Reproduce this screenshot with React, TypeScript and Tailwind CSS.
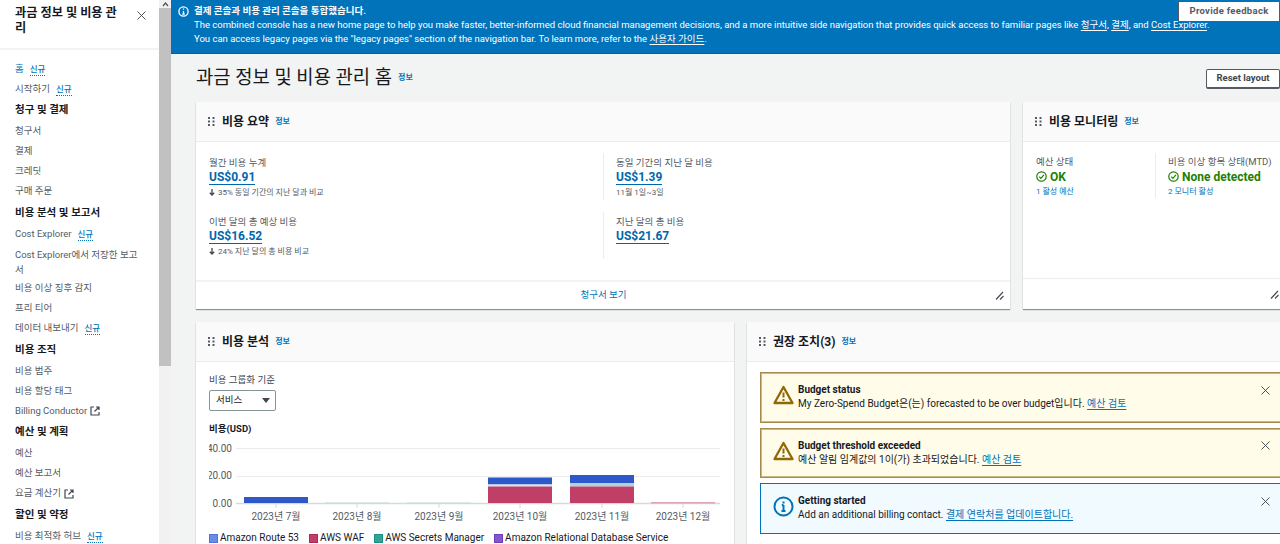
import React from 'react';
import { X } from 'lucide-react';

const FONT = { fontFamily: 'Roboto, "Noto Sans CJK KR", sans-serif' };

type NavItem = { label: string; kind?: 'head' | 'active'; isNew?: boolean; ext?: boolean; wrap?: boolean };

const NAV: NavItem[] = [
  { label: '홈', kind: 'active', isNew: true },
  { label: '시작하기', isNew: true },
  { label: '청구 및 결제', kind: 'head' },
  { label: '청구서' },
  { label: '결제' },
  { label: '크레딧' },
  { label: '구매 주문' },
  { label: '비용 분석 및 보고서', kind: 'head' },
  { label: 'Cost Explorer', isNew: true },
  { label: 'Cost Explorer에서 저장한 보고서', wrap: true },
  { label: '비용 이상 징후 감지' },
  { label: '프리 티어' },
  { label: '데이터 내보내기', isNew: true },
  { label: '비용 조직', kind: 'head' },
  { label: '비용 범주' },
  { label: '비용 할당 태그' },
  { label: 'Billing Conductor', ext: true },
  { label: '예산 및 계획', kind: 'head' },
  { label: '예산' },
  { label: '예산 보고서' },
  { label: '요금 계산기', ext: true },
  { label: '할인 및 약정', kind: 'head' },
  { label: '비용 최적화 허브', isNew: true },
];

const ExternalIcon = () => (
  <svg width="10" height="10" viewBox="0 0 10 10" fill="none" stroke="#414750" strokeWidth="1.2" className="ml-[3px] shrink-0">
    <path d="M4 1H1v8h8V6M6 1h3v3M9 1L4.5 5.5" />
  </svg>
);

const Sidebar = () => (
  <aside className="w-[159px] shrink-0 h-full bg-white overflow-hidden">
    <div className="h-[50px] border-b-2 border-[#f2f3f3] pl-[15px] pr-[10px] pt-[6px] flex justify-between">
      <div className="w-[110px] text-[12.2px] leading-[15px] font-bold text-[#16191f]">과금 정보 및 비용 관리</div>
      <X size={15} strokeWidth={1.5} color="#414750" className="mt-[2px]" />
    </div>
    <nav className="pl-[15px] pr-[16px] pt-[9px]">
      {NAV.map((item) => {
        if (item.kind === 'head') {
          return (
            <div key={item.label} className="h-[22.5px] flex items-center text-[10.5px] font-bold text-[#16191f]">
              {item.label}
            </div>
          );
        }
        if (item.wrap) {
          return (
            <div key={item.label} className="h-[34.5px] w-[124px] pt-[3px] text-[9.5px] leading-[15px] text-[#545b64]">
              {item.label}
            </div>
          );
        }
        return (
          <div key={item.label} className={`h-[20px] flex items-center text-[9.5px] ${item.kind === 'active' ? 'text-[#0073bb]' : 'text-[#545b64]'}`}>
            <span className="whitespace-nowrap">{item.label}</span>
            {item.isNew && (
              <span className="ml-[6px] text-[8.5px] font-medium text-[#0073bb] border-b border-dotted border-[#0073bb] leading-[12px]">신규</span>
            )}
            {item.ext && <ExternalIcon />}
          </div>
        );
      })}
    </nav>
  </aside>
);

const Scrollbar = () => (
  <div className="w-[12px] shrink-0 h-full bg-[#f1f1f1] flex flex-col">
    <div className="h-[8px] flex items-center justify-center">
      <svg width="7" height="5" viewBox="0 0 7 5" fill="none" stroke="#505050" strokeWidth="1.2">
        <path d="M1 4l2.5-3L6 4" />
      </svg>
    </div>
    <div className="h-[358px] bg-[#c1c1c1]" />
  </div>
);

const Banner = () => (
  <div className="h-[54px] shrink-0 bg-[#0073bb] border-b border-[#0a5f96] flex text-white pl-[7px]">
    <svg width="11" height="11" viewBox="0 0 11 11" fill="none" stroke="white" strokeWidth="1.3" className="mt-[6px] shrink-0">
      <circle cx="5.5" cy="5.5" r="4.6" />
      <path d="M5.5 5v3M4.3 8h2.4M5.5 2.6v1.2" />
    </svg>
    <div className="ml-[5px] pt-[3px] flex-1 min-w-0 text-[9.5px] leading-[13.5px] whitespace-nowrap">
      <div className="font-semibold leading-[15px]">결제 콘솔과 비용 관리 콘솔을 통합했습니다.</div>
      <div>
        The combined console has a new home page to help you make faster, better-informed cloud financial management decisions, and a more intuitive side navigation that provides quick access to familiar pages like{' '}
        <a className="underline underline-offset-2">청구서</a>, <a className="underline underline-offset-2">결제</a>, and <a className="underline underline-offset-2">Cost Explorer</a>.
      </div>
      <div>
        You can access legacy pages via the "legacy pages" section of the navigation bar. To learn more, refer to the{' '}
        <a className="underline underline-offset-2">사용자 가이드</a>.
      </div>
    </div>
    <button className="w-[102px] h-[21px] mt-[1px] shrink-0 bg-white border border-[#545b64] text-[#545b64] text-[9.5px] font-bold tracking-[0.3px]">
      Provide feedback
    </button>
  </div>
);

const Drag = () => (
  <svg width="7" height="9" viewBox="0 0 7 9" fill="#545b64" className="shrink-0">
    <rect x="0" y="0" width="2" height="2" />
    <rect x="4.5" y="0" width="2" height="2" />
    <rect x="0" y="3.5" width="2" height="2" />
    <rect x="4.5" y="3.5" width="2" height="2" />
    <rect x="0" y="7" width="2" height="2" />
    <rect x="4.5" y="7" width="2" height="2" />
  </svg>
);

const Resize = () => (
  <svg width="9" height="9" viewBox="0 0 9 9" fill="none" stroke="#414750" strokeWidth="1.1" className="shrink-0">
    <path d="M1 8.5L8 1M5 8.5L8.5 5" />
  </svg>
);

const Info = () => <span className="text-[8px] font-bold text-[#0073bb]">정보</span>;

const Card = ({ title, children, className }: { title: string; children: React.ReactNode; className: string }) => (
  <section className={`bg-white shadow-[0_1px_1px_0_#8d9096] flex flex-col ${className}`}>
    <header className="h-[40px] shrink-0 bg-[#fafafa] border-b border-[#eaeded] flex items-center pl-[12px]">
      <Drag />
      <h2 className="ml-[7px] mr-[6px] text-[12px] font-bold text-[#16191f]">{title}</h2>
      <Info />
    </header>
    {children}
  </section>
);

const Metric = ({ label, value, sub, arrow }: { label: string; value: string; sub?: string; arrow?: boolean }) => (
  <div className="h-[59px]">
    <div className="text-[9.5px] leading-[14px] text-[#545b64]">{label}</div>
    <div className="h-[15px] flex items-center">
      <span className="text-[12px] font-bold leading-[14px] text-[#0067ac] border-b border-[#0067ac]">{value}</span>
    </div>
    {sub && (
      <div className="mt-[1px] flex items-center text-[8px] leading-[13px] text-[#545b64]">
        {arrow && (
          <svg width="6" height="7" viewBox="0 0 6 7" fill="none" stroke="#414750" strokeWidth="1.3" className="mr-[3px]">
            <path d="M3 0v6M.8 3.8L3 6l2.2-2.2" />
          </svg>
        )}
        {sub}
      </div>
    )}
  </div>
);

const Summary = () => (
  <Card title="비용 요약" className="h-[207px]">
    <div className="flex-1 grid grid-cols-[407px_1fr]">
      <div className="pl-[13px] pt-[14px]">
        <Metric label="월간 비용 누계" value="US$0.91" sub="35% 동일 기간의 지난 달과 비교" arrow />
        <Metric label="이번 달의 총 예상 비용" value="US$16.52" sub="24% 지난 달의 총 비용 비교" arrow />
      </div>
      <div className="pt-[11px]">
        <div className="border-l border-[#eaeded] pl-[12px] pt-[3px] h-[47px] mb-[12px]">
          <Metric label="동일 기간의 지난 달 비용" value="US$1.39" sub="11월 1일~3일" />
        </div>
        <div className="border-l border-[#eaeded] pl-[12px] pt-[3px] h-[47px]">
          <Metric label="지난 달의 총 비용" value="US$21.67" />
        </div>
      </div>
    </div>
    <footer className="h-[29px] shrink-0 border-t-2 border-[#f2f3f3] flex items-center pr-[6px]">
      <a className="flex-1 text-center pl-[16px] text-[9.5px] text-[#0073bb]">청구서 보기</a>
      <Resize />
    </footer>
  </Card>
);

const Check = () => (
  <svg width="11" height="11" viewBox="0 0 11 11" fill="none" stroke="#1d8102" strokeWidth="1.2" className="shrink-0 mr-[3px]">
    <circle cx="5.5" cy="5.5" r="4.7" />
    <path d="M3.2 5.6l1.7 1.7 3-3.4" />
  </svg>
);

const Monitoring = () => (
  <Card title="비용 모니터링" className="h-[207px]">
    <div className="flex-1 grid grid-cols-[119px_1fr] pt-[11px] pl-[13px]">
      <div className="pt-[2px]">
        <div className="text-[9.5px] leading-[14px] text-[#545b64]">예산 상태</div>
        <div className="flex items-center h-[15px] text-[12px] font-bold text-[#1d8102]"><Check />OK</div>
        <div className="mt-[2px] text-[8px] leading-[12px] text-[#0073bb]">1 활성 예산</div>
      </div>
      <div className="border-l border-[#eaeded] pl-[12px] pt-[2px] h-[45px] whitespace-nowrap">
        <div className="text-[9.5px] leading-[14px] text-[#545b64]">비용 이상 항목 상태(MTD)</div>
        <div className="flex items-center h-[15px] text-[12px] font-bold text-[#1d8102]"><Check />None detected</div>
        <div className="mt-[2px] text-[8px] leading-[12px] text-[#0073bb]">2 모니터 활성</div>
      </div>
    </div>
    <footer className="h-[31px] shrink-0 border-t border-[#eaeded] flex items-center justify-end pr-[3px]">
      <Resize />
    </footer>
  </Card>
);

const BARS = [
  { x: 35, label: '2023년 7월' },
  { x: 116, label: '2023년 8월' },
  { x: 198, label: '2023년 9월' },
  { x: 279, label: '2023년 10월' },
  { x: 361, label: '2023년 11월' },
  { x: 442, label: '2023년 12월' },
];

const Chart = () => (
  <svg width="511" height="84" viewBox="0 0 511 84" className="block" style={FONT}>
    <g fontSize="10" fill="#545b64" textAnchor="end">
      <text x="23" y="11.5">40.00</text>
      <text x="23" y="39">20.00</text>
      <text x="23" y="66.5">0.00</text>
    </g>
    <path d="M27 8.5H511M27 36.5H511" stroke="#e9ebed" />
    <path d="M27 63.5H511" stroke="#d5dbdb" strokeWidth="1.5" />
    <rect x="35" y="57" width="64" height="6" fill="#2e58c9" />
    <rect x="116" y="62.5" width="64" height="1" fill="#c5dcd8" />
    <rect x="198" y="62.5" width="64" height="1" fill="#c5dcd8" />
    <rect x="279" y="37.5" width="64" height="7" fill="#2e58c9" />
    <rect x="279" y="44.5" width="64" height="2" fill="#cfe6ea" />
    <rect x="279" y="46.5" width="64" height="16.5" fill="#c03f66" />
    <rect x="361" y="35" width="64" height="8" fill="#2e58c9" />
    <rect x="361" y="43" width="64" height="3.5" fill="#a9d6dc" />
    <rect x="361" y="46.5" width="64" height="16.5" fill="#c03f66" />
    <rect x="442" y="62" width="64" height="1.5" fill="#dca6b8" />
    {BARS.map((b) => (
      <g key={b.label}>
        <path d={`M${b.x + 32} 64v4`} stroke="#d5dbdb" />
        <text x={b.x + 32} y="80" fontSize="10" fill="#545b64" textAnchor="middle">{b.label}</text>
      </g>
    ))}
  </svg>
);

const LEGEND = [
  { label: 'Amazon Route 53', cls: 'bg-[#688ae8] border-[#4f74dd]' },
  { label: 'AWS WAF', cls: 'bg-[#c33d69] border-[#ad2c56]' },
  { label: 'AWS Secrets Manager', cls: 'bg-[#2ea597] border-[#1f8f82]' },
  { label: 'Amazon Relational Database Service', cls: 'bg-[#8456ce] border-[#6b3fb5]' },
];

const Analysis = () => (
  <Card title="비용 분석" className="h-[300px]">
    <div className="pl-[13px] pt-[11px]">
      <div className="text-[9.5px] leading-[14px] text-[#414750]">비용 그룹화 기준</div>
      <div className="mt-[3px] w-[67px] h-[21px] border border-[#879596] rounded-[2px] flex items-center justify-between pl-[6px] pr-[5px] text-[9.5px] text-[#16191f]">
        서비스
        <svg width="8" height="5" viewBox="0 0 8 5" fill="#414750"><path d="M0 0h8L4 5z" /></svg>
      </div>
      <div className="mt-[11px] h-[14px] text-[9.5px] leading-[14px] font-bold text-[#16191f]">비용(USD)</div>
      <div className="mt-[4px]"><Chart /></div>
      <div className="mt-[7px] flex gap-[10px] text-[10px] leading-[14px] text-[#16191f] whitespace-nowrap">
        {LEGEND.map((l) => (
          <div key={l.label} className="flex items-center gap-[2px]">
            <span className={`w-[9px] h-[9px] border ${l.cls}`} />
            {l.label}
          </div>
        ))}
      </div>
    </div>
  </Card>
);

const Warn = () => (
  <svg width="21" height="20" viewBox="0 0 21 20" fill="none" className="shrink-0">
    <path d="M10.5 2L19.5 18H1.5z" stroke="#906806" strokeWidth="2.3" strokeLinejoin="round" />
    <path d="M10.5 7.5v5M10.5 14v2" stroke="#906806" strokeWidth="2" />
  </svg>
);

const InfoBig = () => (
  <svg width="21" height="21" viewBox="0 0 21 21" fill="none" className="shrink-0">
    <circle cx="10.5" cy="10.5" r="9" stroke="#0073bb" strokeWidth="2" />
    <path d="M10.5 9v6M8.5 15h4M8.8 9h1.7M10.5 5.5v2" stroke="#0073bb" strokeWidth="2" />
  </svg>
);

const Alert = ({ kind, title, text, link }: { kind: 'warn' | 'info'; title: string; text: string; link: string }) => (
  <div className={`h-[50.5px] border flex pl-[12px] pr-[11px] ${kind === 'warn' ? 'border-[#a58c4c] bg-[#fffce9] shadow-[inset_0_0_0_1px_#c9b681]' : 'border-[#0073bb] bg-[#f1faff]'}`}>
    <div className="w-[25px] pt-[12px] shrink-0">{kind === 'warn' ? <Warn /> : <InfoBig />}</div>
    <div className="flex-1 pt-[10px] text-[10px] leading-[14px] text-[#16191f] whitespace-nowrap">
      <div className="font-bold">{title}</div>
      <div>
        {text} <a className="text-[#0073bb] underline underline-offset-2">{link}</a>
      </div>
    </div>
    <X size={15} strokeWidth={1.5} color="#414750" className="mt-[9.5px]" />
  </div>
);

const Actions = () => (
  <Card title="권장 조치(3)" className="h-[300px]">
    <div className="pt-[10px] pl-[13px] pr-[8px] flex flex-col gap-[5px]">
      <Alert kind="warn" title="Budget status" text="My Zero-Spend Budget은(는) forecasted to be over budget입니다." link="예산 검토" />
      <Alert kind="warn" title="Budget threshold exceeded" text="예산 알림 임계값의 1이(가) 초과되었습니다." link="예산 검토" />
      <Alert kind="info" title="Getting started" text="Add an additional billing contact." link="결제 연락처를 업데이트합니다." />
    </div>
  </Card>
);

export default function App() {
  return (
    <div className="w-[1280px] h-[544px] overflow-hidden flex bg-[#f2f3f3]" style={FONT}>
      <Sidebar />
      <Scrollbar />
      <main className="flex-1 min-w-0 h-full flex flex-col">
        <Banner />
        <div className="pl-[25px] flex flex-col">
          <div className="h-[48px] flex items-center justify-between">
            <div className="flex items-center gap-[6px]">
              <h1 className="text-[18.8px] font-normal text-[#16191f]">과금 정보 및 비용 관리 홈</h1>
              <Info />
            </div>
            <button className="w-[74px] h-[20px] mt-[2px] bg-white border border-[#545b64] border-b-2 rounded-[2px] text-[#414750] text-[9.5px] font-bold">
              Reset layout
            </button>
          </div>
          <div className="grid grid-cols-[814px_259px] gap-[13px] w-[1086px]">
            <Summary />
            <Monitoring />
          </div>
          <div className="mt-[13px] grid grid-cols-[538px_546px] gap-[13px] w-[1097px]">
            <Analysis />
            <Actions />
          </div>
        </div>
      </main>
    </div>
  );
}
